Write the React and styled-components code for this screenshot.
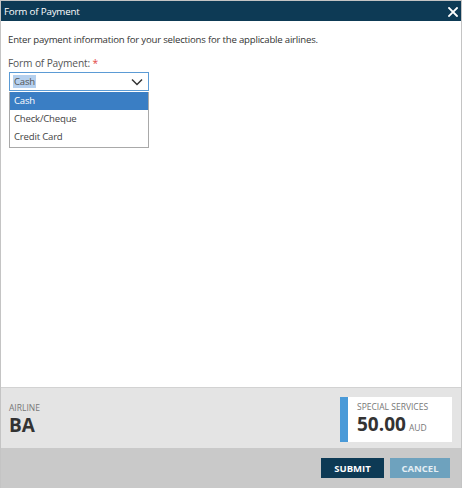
import React from 'react'
import styled, { createGlobalStyle } from 'styled-components'

const GlobalStyle = createGlobalStyle`
    html, body { margin: 0; padding: 0; }
    body {
        font-family: "Open Sans", "Noto Sans", sans-serif;
        color: #333;
        background: #fff;
    }
`;

const options = ['Cash', 'Check/Cheque', 'Credit Card'];

export default function App() {
    return (
        <>
            <GlobalStyle />
            <Dialog>
                <TitleBar>
                    <span>Form of Payment</span>
                    <CloseButton aria-label='close'>
                        <svg width='10' height='10' viewBox='0 0 10 10'>
                            <path d='M1 1L9 9M9 1L1 9' stroke='#fff' strokeWidth='1.8' strokeLinecap='square' />
                        </svg>
                    </CloseButton>
                </TitleBar>

                <Body>
                    <Intro>Enter payment information for your selections for the applicable airlines.</Intro>
                    <Label>Form of Payment: <Required>*</Required></Label>
                    <SelectWrap>
                        <SelectBox>
                            <Selected>Cash</Selected>
                            <svg width='12' height='8' viewBox='0 0 12 8'>
                                <path d='M1 1.5L6 6.5L11 1.5' fill='none' stroke='#333' strokeWidth='1.5' />
                            </svg>
                        </SelectBox>
                        <OptionList>
                            {options.map((o, i) => (
                                <Option key={o} $active={i === 0}>{o}</Option>
                            ))}
                        </OptionList>
                    </SelectWrap>
                </Body>

                <Summary>
                    <Stat>
                        <StatLabel>AIRLINE</StatLabel>
                        <StatValue>BA</StatValue>
                    </Stat>
                    <ServiceCard>
                        <StatLabel>SPECIAL SERVICES</StatLabel>
                        <StatValue>50.00<Currency>AUD</Currency></StatValue>
                    </ServiceCard>
                </Summary>

                <Actions>
                    <Button>SUBMIT</Button>
                    <Button $secondary>CANCEL</Button>
                </Actions>
            </Dialog>
        </>
    )
}

const Dialog = styled.div`
    width: 462px;
    height: 488px;
    box-sizing: border-box;
    display: flex;
    flex-direction: column;
    border: 1px solid #c4c4c4;
    border-bottom: none;
    overflow: hidden;
`;

const TitleBar = styled.div`
    height: 20px;
    flex-shrink: 0;
    background: #0d3a55;
    color: #fff;
    font-size: 9.8px;
    letter-spacing: -0.2px;
    display: flex;
    align-items: center;
    justify-content: space-between;
    padding: 0 2px 0 4px;
    margin: 0 -1px;
`;

const CloseButton = styled.button`
    border: none;
    background: none;
    padding: 0;
    width: 14px;
    height: 14px;
    display: flex;
    align-items: center;
    justify-content: center;
    margin-top: 2px;
`;

const Body = styled.div`
    flex: 1;
    padding: 12px 7px 10px;
    background: #fff;
`;

const Intro = styled.p`
    margin: 0 0 10px;
    font-size: 9.6px;
    letter-spacing: -0.2px;
    color: #333;
`;

const Label = styled.div`
    font-size: 10.2px;
    letter-spacing: -0.15px;
    color: #555;
    margin-bottom: 2px;
`;

const Required = styled.span`
    color: #e3473f;
`;

const SelectWrap = styled.div`
    width: 140px;
    margin-left: 1px;
`;

const SelectBox = styled.div`
    height: 19px;
    box-sizing: border-box;
    border: 1px solid #5b9bd5;
    display: flex;
    align-items: center;
    justify-content: space-between;
    padding: 0 5px 0 3px;
    font-size: 9.6px;
    letter-spacing: -0.2px;
`;

const Selected = styled.span`
    background: #b5d0ee;
    color: #555;
    padding: 0 1px;
    line-height: 13px;
`;

const OptionList = styled.div`
    border: 1px solid #a9a9a9;
    border-top: none;
    padding-bottom: 1px;
`;

const Option = styled.div`
    height: 18px;
    line-height: 18px;
    padding: 0 4px;
    font-size: 9.6px;
    letter-spacing: -0.2px;
    background: ${p => p.$active ? '#3a7ec4' : '#fff'};
    color: ${p => p.$active ? '#fff' : '#444'};
    margin: ${p => p.$active ? '1px 0 0' : '0'};
`;

const Summary = styled.div`
    height: 61px;
    flex-shrink: 0;
    box-sizing: border-box;
    background: #e4e4e4;
    border-top: 1px solid #d2d2d2;
    display: flex;
    justify-content: space-between;
    align-items: center;
    padding: 0 9px 0 8px;
`;

const Stat = styled.div`
    display: flex;
    flex-direction: column;
    padding-top: 2px;
`;

const ServiceCard = styled.div`
    width: 112px;
    height: 45px;
    box-sizing: border-box;
    background: #fff;
    border-left: 8px solid #4a9ad8;
    padding: 4px 0 0 9px;
    display: flex;
    flex-direction: column;
    margin-top: 2px;
`;

const StatLabel = styled.span`
    font-size: 8.5px;
    color: #777;
    line-height: 11px;
`;

const StatValue = styled.span`
    font-size: 19px;
    font-weight: 700;
    color: #333;
    line-height: 24px;
`;

const Currency = styled.span`
    font-size: 8.5px;
    font-weight: 400;
    color: #777;
    margin-left: 3px;
`;

const Actions = styled.div`
    height: 40px;
    flex-shrink: 0;
    background: #c9c9c9;
    display: flex;
    justify-content: flex-end;
    align-items: center;
    gap: 6px;
    padding: 0 12px 0 0;
    margin: 0 -1px;
`;

const Button = styled.button`
    width: ${p => p.$secondary ? '60px' : '63px'};
    height: 20px;
    border: none;
    padding: 0;
    font-family: "Open Sans", sans-serif;
    font-size: 9.5px;
    font-weight: 700;
    background: ${p => p.$secondary ? '#6ea2be' : '#0d3a55'};
    color: ${p => p.$secondary ? '#e4eef4' : '#fff'};
`;
